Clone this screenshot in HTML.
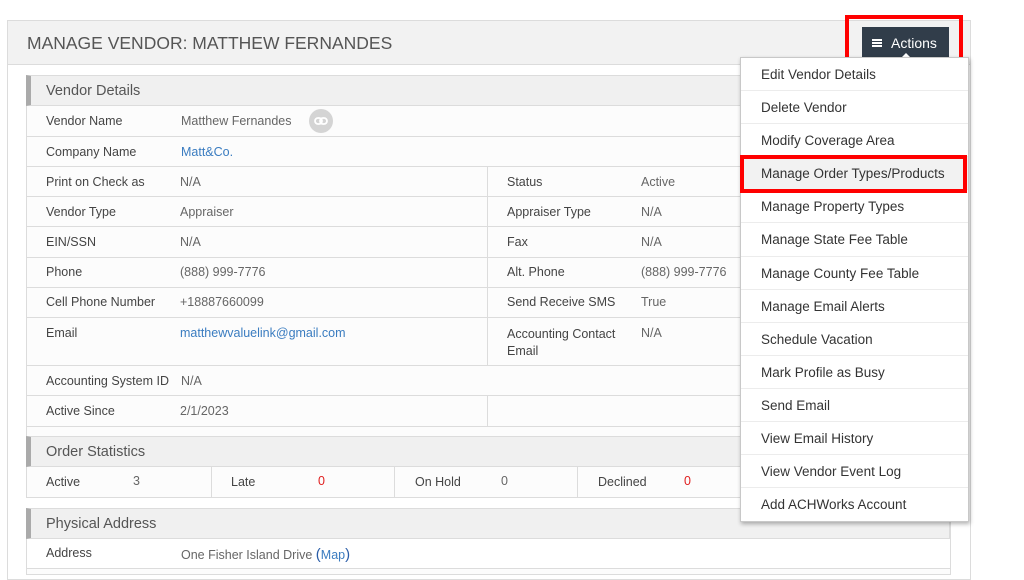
<!DOCTYPE html>
<html><head><meta charset="utf-8"><style>
*{margin:0;padding:0;box-sizing:border-box}
body{width:1024px;height:569px;background:#fff;position:relative;overflow:hidden;font-family:"Liberation Sans",sans-serif;font-size:12.5px;color:#555}
.a{position:absolute}
.l{position:absolute;color:#444;white-space:nowrap}
.v{position:absolute;color:#666;white-space:nowrap}
.h{position:absolute;left:26px;width:924px;height:31px;background:#f0f0f0;border:1px solid #dcdcdc;border-left:5px solid #aaa;font-size:14.5px;color:#555;padding:7px 0 0 15px}
.line{position:absolute;height:1px;background:#dcdcdc}
.vl{position:absolute;width:1px;background:#dcdcdc}
.menu{position:absolute;left:740px;top:57px;width:229px;height:465px;background:#fff;border:1px solid #c8c8c8;box-shadow:1px 2px 4px rgba(0,0,0,.3)}
.menu div{height:33.1px;border-bottom:1px solid #ececec;padding:9px 0 0 20px;font-size:13.5px;color:#333;white-space:nowrap}
.blue{color:#3a7cc0}
.red{color:#e02020}
</style></head><body>
<!-- outer panel -->
<div class="a" style="left:7px;top:20px;width:964px;height:560px;border:1px solid #dcdcdc;background:#fff"></div>
<div class="a" style="left:7px;top:20px;width:964px;height:45px;background:#f2f2f2;border:1px solid #dcdcdc"></div>
<div class="a" style="left:27px;top:33px;font-size:17.5px;color:#555">MANAGE VENDOR: MATTHEW FERNANDES</div>
<!-- inner panel -->
<div class="a" style="left:26px;top:75px;width:925px;height:500px;border:1px solid #dcdcdc;background:#fcfcfc"></div>
<div class="h" style="top:75px">Vendor Details</div>
<div class="line" style="left:26px;width:925px;top:136px"></div>
<div class="line" style="left:26px;width:925px;top:166px"></div>
<div class="line" style="left:26px;width:925px;top:196px"></div>
<div class="line" style="left:26px;width:925px;top:226px"></div>
<div class="line" style="left:26px;width:925px;top:257px"></div>
<div class="line" style="left:26px;width:925px;top:287px"></div>
<div class="line" style="left:26px;width:925px;top:317px"></div>
<div class="line" style="left:26px;width:925px;top:365px"></div>
<div class="line" style="left:26px;width:925px;top:395px"></div>
<div class="line" style="left:26px;width:925px;top:426px"></div>
<div class="vl" style="left:487px;top:166px;height:199px"></div>
<div class="vl" style="left:487px;top:395px;height:31px"></div>

<div class="l" style="left:46px;top:114px">Vendor Name</div><div class="v" style="left:181px;top:114px">Matthew Fernandes</div>
<div class="a" style="left:309px;top:109px;width:24px;height:24px;border-radius:50%;background:#d4d4d4"><svg width="24" height="24" viewBox="0 0 24 24"><g fill="none" stroke="#fff" stroke-width="1.8"><rect x="6" y="9" width="7" height="6" rx="3"/><rect x="11" y="9" width="7" height="6" rx="3"/></g></svg></div>
<div class="l" style="left:46px;top:145px">Company Name</div><div class="v blue" style="left:181px;top:145px">Matt&amp;Co.</div>
<div class="l" style="left:46px;top:175px">Print on Check as</div><div class="v" style="left:180px;top:175px">N/A</div>
<div class="l" style="left:507px;top:175px">Status</div><div class="v" style="left:641px;top:175px">Active</div>
<div class="l" style="left:46px;top:205px">Vendor Type</div><div class="v" style="left:180px;top:205px">Appraiser</div>
<div class="l" style="left:507px;top:205px">Appraiser Type</div><div class="v" style="left:641px;top:205px">N/A</div>
<div class="l" style="left:46px;top:235px">EIN/SSN</div><div class="v" style="left:180px;top:235px">N/A</div>
<div class="l" style="left:507px;top:235px">Fax</div><div class="v" style="left:641px;top:235px">N/A</div>
<div class="l" style="left:46px;top:265px">Phone</div><div class="v" style="left:180px;top:265px">(888) 999-7776</div>
<div class="l" style="left:507px;top:265px">Alt. Phone</div><div class="v" style="left:641px;top:265px">(888) 999-7776</div>
<div class="l" style="left:46px;top:295px">Cell Phone Number</div><div class="v" style="left:180px;top:295px">+18887660099</div>
<div class="l" style="left:507px;top:295px">Send Receive SMS</div><div class="v" style="left:641px;top:295px">True</div>
<div class="l" style="left:46px;top:326px">Email</div><div class="v blue" style="left:180px;top:326px">matthewvaluelink@gmail.com</div>
<div class="l" style="left:507px;top:326px;line-height:17px">Accounting Contact<br>Email</div><div class="v" style="left:641px;top:326px">N/A</div>
<div class="l" style="left:46px;top:374px">Accounting System ID</div><div class="v" style="left:181px;top:374px">N/A</div>
<div class="l" style="left:46px;top:404px">Active Since</div><div class="v" style="left:180px;top:404px">2/1/2023</div>

<div class="a" style="left:26px;top:436px;width:925px;height:72px;background:#fff"></div>
<div class="h" style="top:436px">Order Statistics</div>
<div class="a" style="left:26px;top:467px;width:925px;height:31px;border:1px solid #dcdcdc;border-top:none;background:#fcfcfc"></div>
<div class="vl" style="left:211px;top:467px;height:31px"></div>
<div class="vl" style="left:394px;top:467px;height:31px"></div>
<div class="vl" style="left:577px;top:467px;height:31px"></div>
<div class="l" style="left:46px;top:475px">Active</div><div class="v" style="left:133px;top:474px">3</div>
<div class="l" style="left:231px;top:475px">Late</div><div class="v red" style="left:318px;top:474px">0</div>
<div class="l" style="left:415px;top:475px">On Hold</div><div class="v" style="left:501px;top:474px">0</div>
<div class="l" style="left:598px;top:475px">Declined</div><div class="v red" style="left:684px;top:474px">0</div>

<div class="h" style="top:508px">Physical Address</div>
<div class="a" style="left:26px;top:539px;width:925px;height:30px;border:1px solid #dcdcdc;border-top:none;background:#fff"></div>
<div class="l" style="left:46px;top:546px">Address</div><div class="v" style="left:181px;top:546px">One Fisher Island Drive <span style="color:#2a5da8;font-size:15px">(</span><span class="blue">Map</span><span style="color:#2a5da8;font-size:15px">)</span></div>

<!-- actions -->
<div class="a" style="left:862px;top:27px;width:87px;height:31px;background:#313d4a;color:#fff;font-size:14px;padding:8px 0 0 10px"><span style="display:inline-block;width:10px;height:8px;border-top:2px solid #fff;border-bottom:2px solid #fff;position:relative;top:-1px;margin-right:9px"><span style="position:absolute;left:0;top:1px;width:10px;height:2px;background:#fff"></span></span>Actions</div>
<div class="a" style="left:900px;top:53px;width:0;height:0;border-left:6px solid transparent;border-right:6px solid transparent;border-bottom:6px solid #fff"></div>
<div class="a" style="left:845px;top:15px;width:118px;height:51px;border:4px solid #f00"></div>

<div class="menu">
<div>Edit Vendor Details</div><div>Delete Vendor</div><div>Modify Coverage Area</div><div style="background:#f2f2f2">Manage Order Types/Products</div><div>Manage Property Types</div><div>Manage State Fee Table</div><div>Manage County Fee Table</div><div>Manage Email Alerts</div><div>Schedule Vacation</div><div>Mark Profile as Busy</div><div>Send Email</div><div>View Email History</div><div>View Vendor Event Log</div><div style="border:none">Add ACHWorks Account</div>
</div>
<div class="a" style="left:740px;top:155px;width:227px;height:38px;border:4px solid #f00"></div>
</body></html>
